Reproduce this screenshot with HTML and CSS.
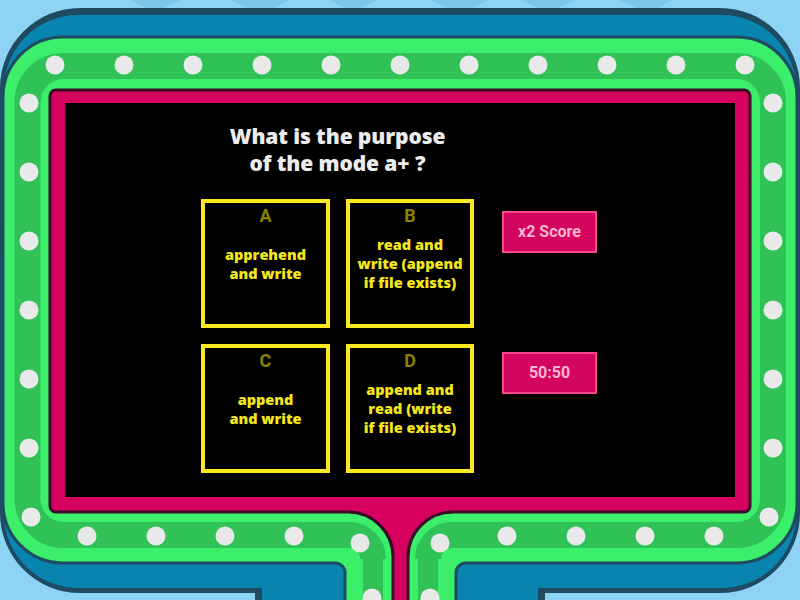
FILE: index.html
```html
<!DOCTYPE html>
<html lang="en">
<head>
<meta charset="utf-8">
<title>Gameshow Quiz</title>
<link rel="stylesheet" href="styles.css">
</head>
<body>
<div class="stage">
  <svg class="frame" width="800" height="600" viewBox="0 0 800 600" aria-hidden="true">
    <g class="sky-pattern">
      <polygon points="230,0 262,14 290,0"/>
      <polygon points="330,0 352,12 378,0"/>
      <polygon points="430,0 462,14 488,0"/>
      <polygon points="520,0 548,12 575,0"/>
      <polygon points="130,0 155,12 182,0"/>
      <polygon points="620,0 648,14 672,0"/>
    </g>
    <path class="teal" d="M80 8 H720 A80 80 0 0 1 800 88 V513 A80 80 0 0 1 720 593 H545 V610 H255 V593 H80 A80 80 0 0 1 0 513 V88 A80 80 0 0 1 80 8 Z"/>
    <path class="blue" d="M78 15 H722 A74 74 0 0 1 796 89 V514 A74 74 0 0 1 722 588 H538 V610 H262 V588 H78 A74 74 0 0 1 4 514 V89 A74 74 0 0 1 78 15 Z"/>
    <path class="green" d="M63 37 H737 A60 60 0 0 1 797 97 V503 A60 60 0 0 1 737 563 H466 A10 10 0 0 0 456 573 V612 H345 V573 A10 10 0 0 0 335 563 H63 A60 60 0 0 1 3 503 V97 A60 60 0 0 1 63 37 Z"/>
    <path class="mid" d="M428 559 A24 24 0 0 1 452 535 H737 A36 36 0 0 0 773 499 V102 A36 36 0 0 0 737 66 H63.5 A36 36 0 0 0 27.5 102 V499 A36 36 0 0 0 63.5 535 H349 A24 24 0 0 1 373 559"/>
    <path class="mid arm" d="M373 558 V612 M428 558 V612"/>
    <path class="pink" d="M56 90 H744 A6 6 0 0 1 750 96 V506 A6 6 0 0 1 744 512 H453 A45 45 0 0 0 408 557 V612 H393 V557 A45 45 0 0 0 348 512 H56 A6 6 0 0 1 50 506 V96 A6 6 0 0 1 56 90 Z"/>
    <g class="dots">
      <circle cx="55" cy="65" r="9.5"/><circle cx="124" cy="65" r="9.5"/><circle cx="193" cy="65" r="9.5"/>
      <circle cx="262" cy="65" r="9.5"/><circle cx="331" cy="65" r="9.5"/><circle cx="400" cy="65" r="9.5"/>
      <circle cx="469" cy="65" r="9.5"/><circle cx="538" cy="65" r="9.5"/><circle cx="607" cy="65" r="9.5"/>
      <circle cx="676" cy="65" r="9.5"/><circle cx="745" cy="65" r="9.5"/>
      <circle cx="29" cy="103" r="9.5"/><circle cx="29" cy="172" r="9.5"/><circle cx="29" cy="241" r="9.5"/>
      <circle cx="29" cy="310" r="9.5"/><circle cx="29" cy="379" r="9.5"/><circle cx="29" cy="448" r="9.5"/>
      <circle cx="31" cy="517" r="9.5"/>
      <circle cx="773" cy="103" r="9.5"/><circle cx="773" cy="172" r="9.5"/><circle cx="773" cy="241" r="9.5"/>
      <circle cx="773" cy="310" r="9.5"/><circle cx="773" cy="379" r="9.5"/><circle cx="773" cy="448" r="9.5"/>
      <circle cx="769" cy="517" r="9.5"/>
      <circle cx="87" cy="536" r="9.5"/><circle cx="156" cy="536" r="9.5"/><circle cx="225" cy="536" r="9.5"/>
      <circle cx="294" cy="536" r="9.5"/><circle cx="360" cy="543" r="9.5"/><circle cx="372" cy="598" r="9.5"/>
      <circle cx="440" cy="543" r="9.5"/><circle cx="507" cy="536" r="9.5"/><circle cx="576" cy="536" r="9.5"/>
      <circle cx="645" cy="536" r="9.5"/><circle cx="714" cy="536" r="9.5"/><circle cx="430" cy="598" r="9.5"/>
    </g>
  </svg>

  <div class="screen">
    <div class="content">
      <div class="main">
        <h1 class="question">What is the purpose<br>of the mode a+ ?</h1>
        <div class="answers">
          <div class="answer">
            <span class="letter">A</span>
            <span class="text">apprehend<br>and write</span>
          </div>
          <div class="answer">
            <span class="letter">B</span>
            <span class="text">read and<br>write (append<br>if file exists)</span>
          </div>
          <div class="answer">
            <span class="letter">C</span>
            <span class="text">append<br>and write</span>
          </div>
          <div class="answer">
            <span class="letter">D</span>
            <span class="text">append and<br>read (write<br>if file exists)</span>
          </div>
        </div>
      </div>
      <div class="side">
        <div class="power">x2 Score</div>
        <div class="power">50:50</div>
      </div>
    </div>
  </div>
</div>
</body>
</html>
```

FILE: styles.css
```css
html, body {
  margin: 0;
  padding: 0;
}

.stage {
  position: relative;
  width: 800px;
  height: 600px;
  overflow: hidden;
  box-sizing: border-box;
  padding: 103px 65px 0;
  background: #8dd3f3;
}

.frame {
  position: absolute;
  left: 0;
  top: 0;
}

.sky-pattern polygon {
  fill: #7cc6ea;
}

.teal {
  fill: #1f4b62;
}

.blue {
  fill: #0984ae;
}

.green {
  fill: #3bef6b;
  stroke: #1f4b62;
  stroke-width: 3;
}

.mid {
  fill: none;
  stroke: #30c157;
  stroke-width: 26;
}

.mid.arm {
  stroke-width: 20;
}

.pink {
  fill: #d6015f;
  stroke: #3a0c25;
  stroke-width: 3;
}

.dots circle {
  fill: #e9e9e9;
}

.screen {
  position: relative;
  height: 394px;
  background: #000;
}

.content {
  display: flex;
  padding: 19.5px 0 0 136px;
}

.main {
  width: 273px;
}

.question {
  margin: 0;
  font-family: "Open Sans", Lato, sans-serif;
  font-weight: 800;
  font-size: 21px;
  line-height: 27px;
  letter-spacing: -0.1px;
  color: #ececec;
  text-align: center;
}

.answers {
  display: grid;
  grid-template-columns: 129px 128px;
  grid-auto-rows: 129px;
  gap: 16px;
  margin-top: 22.5px;
}

.answer {
  box-sizing: border-box;
  border: 4px solid #fbe920;
  display: grid;
}

.letter {
  grid-area: 1 / 1;
  align-self: start;
  justify-self: center;
  margin-top: 3px;
  font-family: Roboto, "Liberation Sans", sans-serif;
  font-weight: 700;
  font-size: 18px;
  line-height: 20px;
  color: #878300;
}

.text {
  grid-area: 1 / 1;
  align-self: center;
  text-align: center;
  font-family: "Open Sans", Lato, sans-serif;
  font-weight: 800;
  font-size: 14.5px;
  line-height: 19px;
  letter-spacing: 0;
  color: #f4e81a;
}

.side {
  display: flex;
  flex-direction: column;
  gap: 99px;
  margin-left: 28px;
  padding-top: 88.5px;
}

.power {
  box-sizing: border-box;
  width: 95px;
  height: 42px;
  background: #d4055f;
  border: 2px solid #f5468c;
  color: #f9b6d2;
  font-family: Roboto, "Liberation Sans", sans-serif;
  font-weight: 700;
  font-size: 16px;
  line-height: 38px;
  text-align: center;
}
```
